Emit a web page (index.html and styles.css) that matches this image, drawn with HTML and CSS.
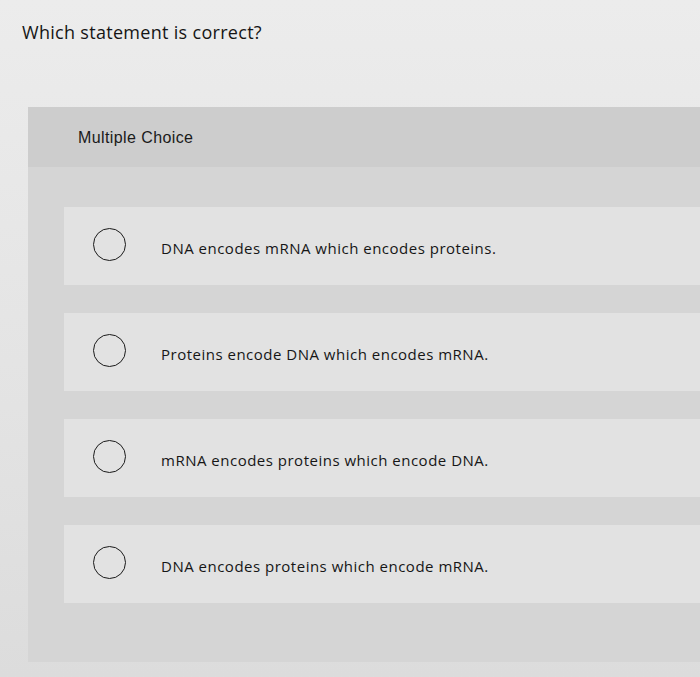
FILE: index.html
```html
<!DOCTYPE html>
<html>
<head>
<meta charset="utf-8">
<link rel="stylesheet" href="styles.css">
</head>
<body>
<div class="page">
  <h1 class="question">Which statement is correct?</h1>
  <div class="panel">
    <div class="panel-head">Multiple Choice</div>
    <div class="options">
      <div class="option"><span class="radio"></span><span class="label">DNA encodes mRNA which encodes proteins.</span></div>
      <div class="option"><span class="radio"></span><span class="label">Proteins encode DNA which encodes mRNA.</span></div>
      <div class="option"><span class="radio"></span><span class="label">mRNA encodes proteins which encode DNA.</span></div>
      <div class="option"><span class="radio"></span><span class="label">DNA encodes proteins which encode mRNA.</span></div>
    </div>
  </div>
</div>
</body>
</html>
```

FILE: styles.css
```css
html, body {
  margin: 0;
  padding: 0;
  background: #e4e4e4;
}
.page {
  width: 700px;
  height: 677px;
  overflow: hidden;
  background: linear-gradient(180deg, #ececec 0%, #e3e3e3 60%, #dcdcdc 100%);
  font-family: "Open Sans", "Liberation Sans", sans-serif;
  color: #1c1c1c;
}
.question {
  margin: 0;
  padding: 20px 0 0 22px;
  height: 107px;
  box-sizing: border-box;
  font-size: 18px;
  font-weight: 400;
  letter-spacing: 0.3px;
  line-height: 24px;
  color: #151515;
}
.panel {
  margin-left: 28px;
  height: 555px;
  background: #d5d5d5;
  display: flex;
  flex-direction: column;
}
.panel-head {
  height: 60px;
  box-sizing: border-box;
  padding-left: 50px;
  padding-top: 2px;
  display: flex;
  align-items: center;
  background: #cdcdcd;
  font-family: "Liberation Sans", Arial, sans-serif;
  font-size: 16px;
  letter-spacing: 0.4px;
  color: #1a1a1a;
}
.options {
  padding: 40px 0 0 36px;
  display: flex;
  flex-direction: column;
  gap: 28px;
}
.option {
  height: 78px;
  background: #e2e2e2;
  display: flex;
  align-items: center;
  padding-left: 29px;
}
.radio {
  width: 31px;
  height: 31px;
  border: 1.6px solid #1a1a1a;
  border-radius: 50%;
  flex: none;
  margin-top: -4px;
}
.label {
  margin-left: 35px;
  margin-top: 4px;
  font-size: 15px;
  letter-spacing: 0.5px;
  font-weight: 500;
  color: #161616;
}
```
